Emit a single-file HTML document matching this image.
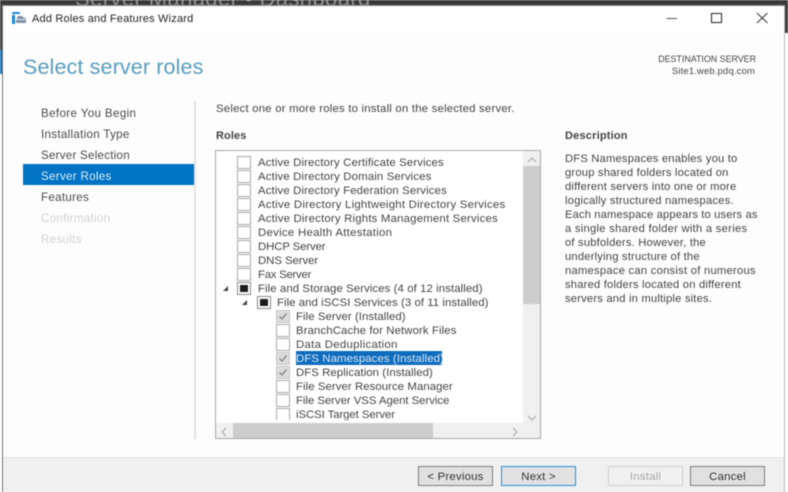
<!DOCTYPE html>
<html><head><meta charset="utf-8">
<style>
html,body{margin:0;padding:0;width:788px;height:492px;overflow:hidden;background:#fff}
body{position:relative;font-family:"Liberation Sans",sans-serif;color:#444}
div,span{position:absolute;box-sizing:border-box}
#all{left:0;top:0;width:788px;height:492px;overflow:hidden;filter:blur(.4px)}
.t{white-space:nowrap;font-size:11.4px;line-height:14px;height:14px;letter-spacing:.24px}
.n{font-size:11.6px;line-height:14px;height:14px;white-space:nowrap;left:41px;letter-spacing:.3px;color:#4a4a4a}
.cb{width:14px;height:13px;border:1px solid #a8a8a8;background:#fff}
.cb.c{background:#dcdcdc;border-color:#c8c8c8}
.cb.m{border-color:#8a8a8a;background:#fff}
.cb.m:after{content:"";position:absolute;left:2px;top:2px;width:8px;height:7px;background:#1c1c1c}
.d{left:565px;font-size:11.2px;line-height:14px;height:14px;white-space:nowrap;letter-spacing:.2px;color:#444}
.b{height:20px;top:466px;border:1px solid #7f7f7f;background:#e1e1e1;font-size:11.4px;line-height:20px;text-align:center;color:#333;letter-spacing:.2px}
</style></head><body>
<div id="all">
<div style="left:0;top:0;width:788px;height:5px;background:#3a3a3a;overflow:hidden">
<div style="left:75px;top:-13px;font-size:22px;line-height:24px;color:#8f8f8f;white-space:nowrap;letter-spacing:.4px">Server Manager • Dashboard</div>
</div>
<div style="left:785px;top:0;width:3px;height:33px;background:#3a3a3a"></div>
<div style="left:0;top:5px;width:3px;height:45px;background:#3a3a3a"></div>
<div style="left:0;top:50px;width:2px;height:24px;background:#0f6fc0"></div>
<div style="left:2px;top:5px;width:783px;height:487px;background:#fff;border-left:1px solid #777;border-top:1px solid #888;border-right:1px solid #bbb"></div>
<div style="left:3px;top:32px;width:781px;height:425px;background:#fdfdfd"></div>

<svg style="position:absolute;left:11px;top:11px" width="16" height="14" viewBox="0 0 16 14">
<rect x="1" y="1" width="8" height="2" fill="#1b86d8"/><rect x="1" y="4" width="3" height="9" fill="#1b86d8"/>
<path d="M5 9 L7 5 H11 L13 7 H15 V12 H5 Z" fill="#7d93a8"/><rect x="5" y="8" width="10" height="1" fill="#dfe6ec"/>
</svg>
<div class="t" style="left:32px;top:12px;font-size:11px;color:#222;letter-spacing:.19px">Add Roles and Features Wizard</div>

<svg style="position:absolute;left:660px;top:8px" width="120" height="20" viewBox="0 0 120 20" fill="none" stroke="#333">
<path d="M6.500 10.500H17" stroke="#555"/><rect x="51.500" y="5.500" width="10" height="9" stroke-width="1.100"/><path d="M97 5L107.500 15M107.500 5L97 15" stroke-width="1"/>
</svg>

<div style="left:23px;top:53px;font-size:21.500px;line-height:28px;color:#5a9dbf;white-space:nowrap;letter-spacing:.13px">Select server roles</div>
<div style="right:32px;top:53px;font-size:8.900px;line-height:12px;color:#444;white-space:nowrap;text-align:right">DESTINATION SERVER</div>
<div style="right:33px;top:65px;font-size:9.400px;line-height:12px;color:#444;white-space:nowrap;text-align:right;letter-spacing:.2px">Site1.web.pdq.com</div>

<div style="left:194px;top:101px;width:2px;height:338px;background:#e2e2e2"></div>
<div style="left:23px;top:164px;width:171px;height:21px;background:#0073c4"></div>
<div class="n" style="top:107px;letter-spacing:.36px">Before You Begin</div>
<div class="n" style="top:128px">Installation Type</div>
<div class="n" style="top:149px;letter-spacing:.24px">Server Selection</div>
<div class="n" style="top:170px;color:#dcecf8">Server Roles</div>
<div class="n" style="top:191px">Features</div>
<div class="n" style="top:212px;color:#d2d2d2">Confirmation</div>
<div class="n" style="top:233px;color:#d2d2d2">Results</div>

<div class="t" style="left:216px;top:102px;color:#444;letter-spacing:.2px">Select one or more roles to install on the selected server.</div>
<div class="t" style="left:216px;top:129px;font-weight:bold;font-size:11px;color:#444;letter-spacing:.1px">Roles</div>
<div class="t" style="left:565px;top:129px;font-weight:bold;font-size:11px;color:#444;letter-spacing:.2px">Description</div>

<div style="left:215px;top:150px;width:326px;height:289px;border:1px solid #a8a8a8;background:#fff;overflow:hidden"></div>

<div class="cb" style="left:237px;top:156px"></div><div class="t" style="left:258px;top:156px;letter-spacing:.13px">Active Directory Certificate Services</div>
<div class="cb" style="left:237px;top:170px"></div><div class="t" style="left:258px;top:170px;letter-spacing:.14px">Active Directory Domain Services</div>
<div class="cb" style="left:237px;top:184px"></div><div class="t" style="left:258px;top:184px;letter-spacing:.13px">Active Directory Federation Services</div>
<div class="cb" style="left:237px;top:198px"></div><div class="t" style="left:258px;top:198px">Active Directory Lightweight Directory Services</div>
<div class="cb" style="left:237px;top:212px"></div><div class="t" style="left:258px;top:212px;letter-spacing:.19px">Active Directory Rights Management Services</div>
<div class="cb" style="left:237px;top:226px"></div><div class="t" style="left:258px;top:226px;letter-spacing:.28px">Device Health Attestation</div>
<div class="cb" style="left:237px;top:240px"></div><div class="t" style="left:258px;top:240px;letter-spacing:-.12px">DHCP Server</div>
<div class="cb" style="left:237px;top:254px"></div><div class="t" style="left:258px;top:254px;letter-spacing:-.06px">DNS Server</div>
<div class="cb" style="left:237px;top:268px"></div><div class="t" style="left:258px;top:268px;letter-spacing:-.26px">Fax Server</div>
<svg style="position:absolute;left:222px;top:285px" width="8" height="8"><path d="M1 6H6V1Z" fill="#444"/></svg>
<div class="cb m" style="left:237px;top:282px"></div><div class="t" style="left:258px;top:282px;letter-spacing:.08px">File and Storage Services (4 of 12 installed)</div>
<svg style="position:absolute;left:241px;top:299px" width="8" height="8"><path d="M1 6H6V1Z" fill="#444"/></svg>
<div class="cb m" style="left:257px;top:296px"></div><div class="t" style="left:277px;top:296px;letter-spacing:.05px">File and iSCSI Services (3 of 11 installed)</div>
<div class="cb c" style="left:276px;top:310px"></div><div class="t" style="left:296px;top:310px;letter-spacing:.06px">File Server (Installed)</div>
<div class="cb" style="left:276px;top:324px"></div><div class="t" style="left:296px;top:324px;letter-spacing:.1px">BranchCache for Network Files</div>
<div class="cb" style="left:276px;top:338px"></div><div class="t" style="left:296px;top:338px;letter-spacing:.3px">Data Deduplication</div>
<div class="cb c" style="left:276px;top:352px"></div>
<div style="left:296px;top:351px;width:146px;height:14px;background:#0f6cbd"></div>
<div class="t" style="left:296px;top:352px;color:#d9e8f5;letter-spacing:.09px">DFS Namespaces (Installed)</div>
<div class="cb c" style="left:276px;top:366px"></div><div class="t" style="left:296px;top:366px;letter-spacing:.05px">DFS Replication (Installed)</div>
<div class="cb" style="left:276px;top:380px"></div><div class="t" style="left:296px;top:380px;letter-spacing:.06px">File Server Resource Manager</div>
<div class="cb" style="left:276px;top:394px"></div><div class="t" style="left:296px;top:394px;letter-spacing:-.04px">File Server VSS Agent Service</div>
<div style="left:276px;top:408px;width:14px;height:12px;overflow:hidden"><div class="cb" style="left:0;top:0;height:16px"></div></div>
<div class="t" style="left:296px;top:408px;height:12px;overflow:hidden;letter-spacing:-.08px">iSCSI Target Server</div>
<svg style="position:absolute;left:276px;top:310px" width="14" height="70" fill="none" stroke="#8a8a8a" stroke-width="1.400">
<path d="M3.500 6.500L6 9L10.500 3.500"/><path d="M3.500 48.500L6 51L10.500 45.500"/><path d="M3.500 62.500L6 65L10.500 59.500"/>
</svg>

<div style="left:523px;top:151px;width:17px;height:272px;background:#f0f0f0"></div>
<div style="left:523px;top:166px;width:17px;height:138px;background:#cdcdcd"></div>
<div style="left:216px;top:423px;width:324px;height:15px;background:#f0f0f0"></div>
<div style="left:233px;top:423px;width:200px;height:15px;background:#cdcdcd"></div>
<svg style="position:absolute;left:216px;top:151px" width="324" height="287" fill="none" stroke="#a6a6a6">
<path d="M312 11L316 7L320 11"/><path d="M312 265L316 269L320 265"/>
<path d="M10 277L6 281L10 285"/><path d="M297 277L301 281L297 285"/>
</svg>

<div class="d" style="top:152px">DFS Namespaces enables you to</div>
<div class="d" style="top:166px">group shared folders located on</div>
<div class="d" style="top:180px">different servers into one or more</div>
<div class="d" style="top:194px">logically structured namespaces.</div>
<div class="d" style="top:208px;letter-spacing:.14px">Each namespace appears to users as</div>
<div class="d" style="top:222px;letter-spacing:.28px">a single shared folder with a series</div>
<div class="d" style="top:236px">of subfolders. However, the</div>
<div class="d" style="top:250px">underlying structure of the</div>
<div class="d" style="top:264px;letter-spacing:.26px">namespace can consist of numerous</div>
<div class="d" style="top:278px">shared folders located on different</div>
<div class="d" style="top:292px">servers and in multiple sites.</div>

<div style="left:3px;top:457px;width:781px;height:35px;background:#f0f0f0;border-top:1px solid #e4e4e4"></div>
<div class="b" style="left:418px;width:75px">&lt; Previous</div>
<div class="b" style="left:501px;width:75px;border-color:#2f8fd6">Next &gt;</div>
<div class="b" style="left:608px;width:75px;border-color:#d0d0d0;background:#f0f0f0;color:#a8a8a8">Install</div>
<div class="b" style="left:690px;width:75px">Cancel</div>
</div>
</body></html>
